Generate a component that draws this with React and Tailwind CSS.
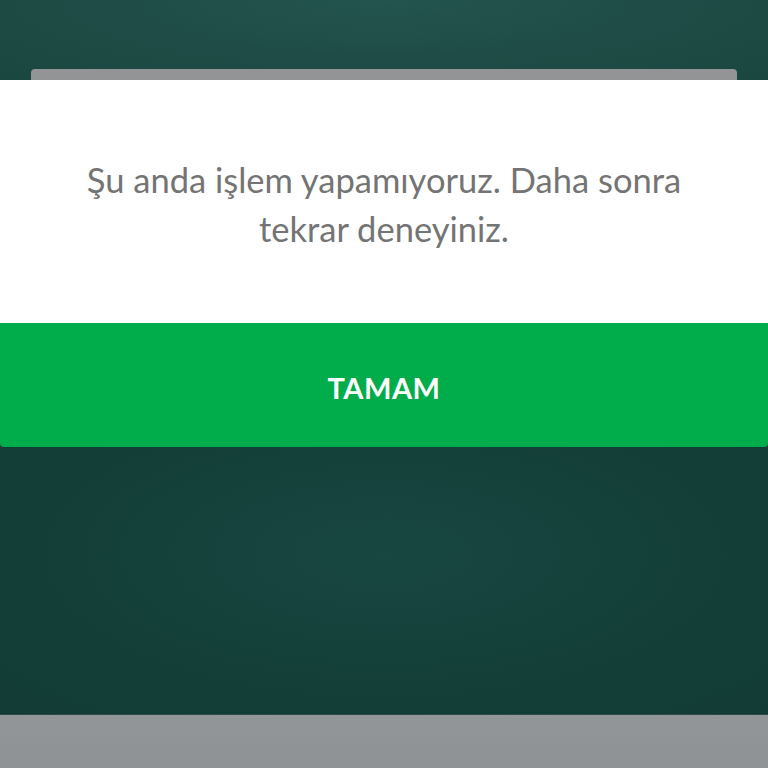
export default function App() {
  return (
    <div className="relative flex h-[768px] w-[768px] flex-col overflow-hidden bg-[#154139] font-['Lato',sans-serif]">
      {/* background behind the dialog */}
      <div className="flex h-[80px] flex-col justify-end bg-[radial-gradient(ellipse_at_50%_0%,#24544e_0%,#1f4c46_50%,#1b4741_100%)]">
        <div className="mx-[31px] h-[11px] rounded-t-[4px] bg-[#929496]" />
      </div>

      {/* dialog */}
      <div className="bg-white px-6 pt-[75px] pb-[70px] text-center">
        <p className="text-[34.5px] leading-[49px] text-[#747474]">
          Şu anda işlem yapamıyoruz. Daha sonra
          <br />
          tekrar deneyiniz.
        </p>
      </div>
      <button className="h-[124px] rounded-b-[4px] bg-[#00ad4a] pt-[6px] text-[29px] font-bold tracking-[0.5px] text-white shadow-[0_2px_3px_rgba(0,0,0,0.3)]">
        TAMAM
      </button>

      <div className="flex-1 bg-[radial-gradient(ellipse_at_50%_40%,#184641_0%,#143f39_60%,#113b34_100%)]" />
      <div className="h-px bg-[#2c4a46]" />
      <div className="h-[53px] bg-[linear-gradient(#929699,#8e9295)]" />
    </div>
  );
}
